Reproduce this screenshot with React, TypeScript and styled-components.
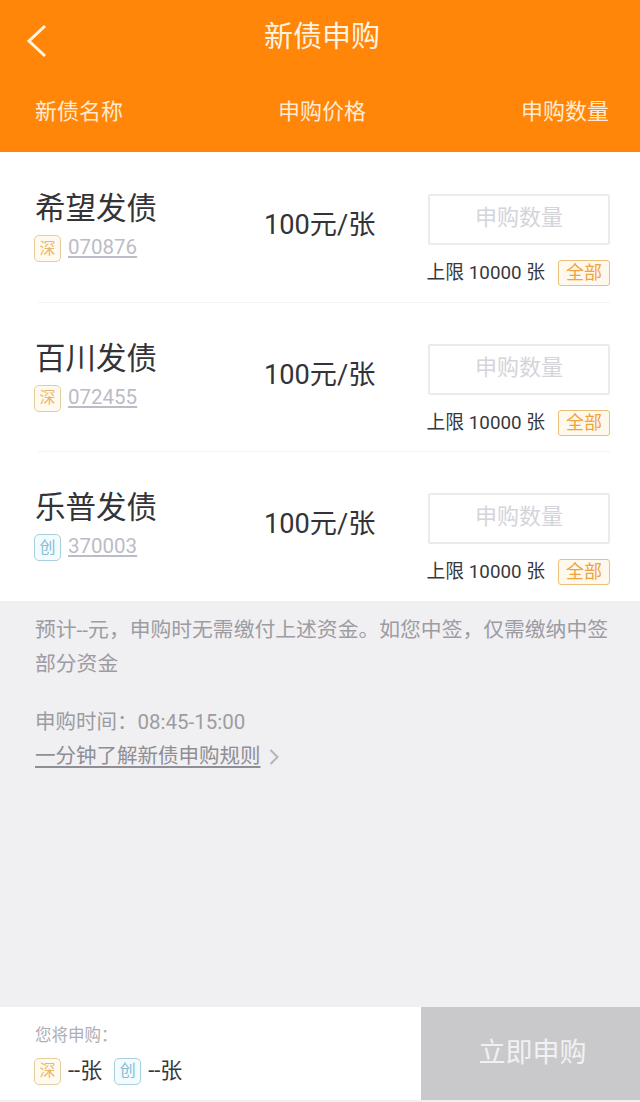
import React from "react";
import styled, { createGlobalStyle } from "styled-components";

const FONT = `"Roboto", "Noto Sans CJK SC", sans-serif`;

const Global = createGlobalStyle`
  html, body { margin: 0; padding: 0; background: #f0eff2; }
  body { font-family: ${FONT}; }
  * { box-sizing: border-box; }
`;

const Page = styled.div`
  width: 640px;
  height: 1102px;
  display: flex;
  flex-direction: column;
  background: #f0eff2;
  overflow: hidden;
`;

const Header = styled.header`
  height: 152px;
  flex: none;
  background: #ff8608;
  color: #fff;
  display: flex;
  flex-direction: column;
  padding: 0 31px 0 35px;
`;

const TitleBar = styled.div`
  height: 96px;
  flex: none;
  display: grid;
  grid-template-columns: 1fr auto 1fr;
  align-items: start;
`;

const Back = styled.svg`
  display: block;
  width: 24px;
  height: 36px;
  margin: 23px 0 0 -10px;
`;

const Title = styled.h1`
  margin: 18px 0 0;
  font-size: 29px;
  line-height: 38px;
  font-weight: 400;
  color: #fff3e2;
`;

const Columns = styled.div`
  display: flex;
  justify-content: space-between;
  font-size: 22px;
  line-height: 32px;
  color: #ffebd3;
`;

const Rows = styled.section`
  background: #fff;
  flex: none;
  display: flex;
  flex-direction: column;
  height: 449px;
`;

const Row = styled.article`
  height: 149.67px;
  padding: 42px 30px 0 35px;
  display: grid;
  grid-template-columns: 229px 164px minmax(0, 1fr);
  position: relative;
  &:not(:last-child)::after {
    content: "";
    position: absolute;
    left: 38px;
    right: 30px;
    bottom: -1px;
    height: 1px;
    background: #f3f3f5;
  }
`;

const NameCol = styled.div`
  display: flex;
  flex-direction: column;
`;

const BondName = styled.div`
  font-size: 30.5px;
  line-height: 30px;
  color: #333338;
`;

const CodeLine = styled.div`
  display: flex;
  align-items: center;
  gap: 7px;
  margin-top: 11px;
  margin-left: -1px;
`;

const Market = styled.span<{ $kind: "sz" | "cy" }>`
  width: 27px;
  height: 27px;
  flex: none;
  display: flex;
  align-items: center;
  justify-content: center;
  border-radius: 5px;
  font-size: 16px;
  line-height: 1;
  border: 1px solid ${(p) => (p.$kind === "sz" ? "#e6cc9c" : "#a8cfdf")};
  color: ${(p) => (p.$kind === "sz" ? "#ebb66c" : "#86bdd3")};
  background: ${(p) => (p.$kind === "sz" ? "#fffaf0" : "#f3fbff")};
`;

const Code = styled.span`
  font-size: 20.5px;
  line-height: 24px;
  color: #bcbcc6;
  text-decoration: underline;
  text-underline-offset: 2px;
  margin-top: -3px;
`;

const Price = styled.div`
  font-size: 27.2px;
  line-height: 34px;
  color: #333338;
  margin-top: 14px;
`;

const QtyCol = styled.div`
  display: flex;
  flex-direction: column;
  align-items: flex-end;
  min-width: 0;
`;

const QtyInput = styled.div`
  width: 182px;
  height: 51px;
  flex: none;
  border: 2px solid #ebebef;
  border-radius: 2px;
  display: flex;
  align-items: center;
  justify-content: center;
  font-size: 22px;
  color: #d4d4da;
  padding-bottom: 9px;
`;

const LimitLine = styled.div`
  display: flex;
  align-items: center;
  margin-top: 15px;
  font-size: 18.8px;
  line-height: 26px;
  color: #38383c;
  white-space: nowrap;
`;

const AllBtn = styled.span`
  width: 52px;
  height: 26px;
  margin-left: 13px;
  border: 1px solid #ecc078;
  border-radius: 3px;
  background: #fff8ec;
  color: #f0a23c;
  font-size: 18px;
  line-height: 23px;
  text-align: center;
`;

const Notes = styled.section`
  flex: 1;
  padding: 12px 30px 0 35px;
  color: #9c9ca2;
`;

const Para = styled.p`
  margin: 0 0 24px;
  font-size: 20.8px;
  line-height: 34px;
`;

const Time = styled.div`
  font-size: 20.5px;
  line-height: 34px;
`;

const RuleLink = styled.div`
  display: flex;
  align-items: center;
  gap: 8px;
  font-size: 20.5px;
  line-height: 26px;
  margin-top: 4px;
  color: #8e8e94;
`;

const RuleText = styled.span`
  text-decoration: underline;
  text-underline-offset: 3px;
`;

const Chevron = styled.svg`
  width: 10px;
  height: 18px;
  display: block;
  margin-top: 2px;
`;

const Footer = styled.footer`
  height: 93px;
  flex: none;
  margin-bottom: 2px;
  background: #fff;
  display: flex;
`;

const Summary = styled.div`
  flex: 1;
  padding: 18px 0 0 34px;
`;

const SummaryLabel = styled.div`
  font-size: 16.5px;
  line-height: 22px;
  color: #aeaeb4;
  margin-left: 1px;
`;

const SummaryLine = styled.div`
  display: flex;
  align-items: center;
  margin-top: 9px;
  font-size: 22px;
  line-height: 30px;
  color: #38383c;
`;

const SummaryQty = styled.span`
  margin: 0 12px 0 7px;
`;

const Submit = styled.button`
  width: 219px;
  flex: none;
  border: 0;
  background: #c9c9cc;
  color: #f1f1f3;
  font-family: inherit;
  font-size: 27px;
  padding: 0 0 6px 4px;
`;

const bonds = [
  { name: "希望发债", kind: "sz" as const, label: "深", code: "070876" },
  { name: "百川发债", kind: "sz" as const, label: "深", code: "072455" },
  { name: "乐普发债", kind: "cy" as const, label: "创", code: "370003" },
];

export default function App() {
  return (
    <Page>
      <Global />
      <Header>
        <TitleBar>
          <Back viewBox="0 0 24 36" fill="none">
            <path d="M20 3 L4 18 L20 33" stroke="#fff3e2" strokeWidth="3" />
          </Back>
          <Title>新债申购</Title>
        </TitleBar>
        <Columns>
          <span>新债名称</span>
          <span>申购价格</span>
          <span>申购数量</span>
        </Columns>
      </Header>
      <Rows>
        {bonds.map((b) => (
          <Row key={b.code}>
            <NameCol>
              <BondName>{b.name}</BondName>
              <CodeLine>
                <Market $kind={b.kind}>{b.label}</Market>
                <Code>{b.code}</Code>
              </CodeLine>
            </NameCol>
            <Price>100元/张</Price>
            <QtyCol>
              <QtyInput>申购数量</QtyInput>
              <LimitLine>
                上限 10000 张
                <AllBtn>全部</AllBtn>
              </LimitLine>
            </QtyCol>
          </Row>
        ))}
      </Rows>
      <Notes>
        <Para>预计--元，申购时无需缴付上述资金。如您中签，仅需缴纳中签部分资金</Para>
        <Time>申购时间：08:45-15:00</Time>
        <RuleLink>
          <RuleText>一分钟了解新债申购规则</RuleText>
          <Chevron viewBox="0 0 10 18" fill="none">
            <path d="M1.5 2 L8.5 9 L1.5 16" stroke="#b4b4ba" strokeWidth="2" />
          </Chevron>
        </RuleLink>
      </Notes>
      <Footer>
        <Summary>
          <SummaryLabel>您将申购：</SummaryLabel>
          <SummaryLine>
            <Market $kind="sz">深</Market>
            <SummaryQty>--张</SummaryQty>
            <Market $kind="cy">创</Market>
            <SummaryQty>--张</SummaryQty>
          </SummaryLine>
        </Summary>
        <Submit>立即申购</Submit>
      </Footer>
    </Page>
  );
}
